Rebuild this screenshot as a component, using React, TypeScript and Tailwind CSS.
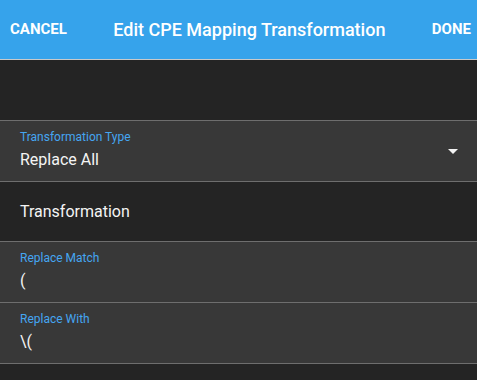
import React from 'react';

function Field({ label, value, caret }: { label: string; value: string; caret?: boolean }) {
  return (
    <div className="relative h-[61px] bg-[#383838] border-b border-[#6e6e6e] px-5 pt-[8px]">
      <div className="text-[12px] leading-[16px] text-[#45a6f2]">{label}</div>
      <div className="text-[16px] leading-[24px] mt-[3px] text-[#f4f4f4]">{value}</div>
      {caret && (
        <svg className="absolute right-[19px] top-[28px]" width="10" height="5" viewBox="0 0 10 5">
          <path d="M0 0h10L5 5z" fill="#f4f4f4" />
        </svg>
      )}
    </div>
  );
}

export default function App() {
  return (
    <div className="w-[477px] h-[380px] bg-[#242424] overflow-hidden" style={{ fontFamily: 'Roboto, "Liberation Sans", sans-serif' }}>
      <header className="h-[60px] bg-[#36a3eb] border-b border-[#c9c9c9] flex items-center justify-between pl-[10px] pr-[6px] text-white">
        <button className="text-[15px] font-bold uppercase">Cancel</button>
        <h1 className="text-[18px] font-medium">Edit CPE Mapping Transformation</h1>
        <button className="text-[15px] font-bold uppercase">Done</button>
      </header>

      <div className="h-[61px] border-b border-[#6e6e6e]" />

      <Field label="Transformation Type" value="Replace All" caret />

      <div className="h-[60px] border-b border-[#6e6e6e] px-5 flex items-center text-[16px] text-[#f4f4f4]">
        Transformation
      </div>

      <Field label="Replace Match" value="(" />
      <Field label="Replace With" value="\(" />
    </div>
  );
}
